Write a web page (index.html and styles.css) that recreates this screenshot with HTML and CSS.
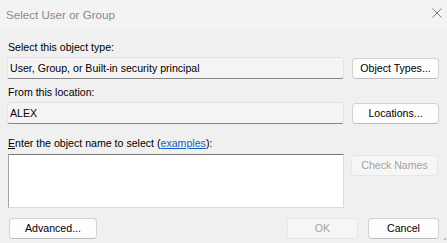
FILE: index.html
```html
<!DOCTYPE html>
<html>
<head>
<meta charset="utf-8">
<title>Select User or Group</title>
<link rel="stylesheet" href="styles.css">
</head>
<body>
<div class="dialog">
  <div class="titlebar">
    <span class="title">Select User or Group</span>
    <svg class="close" width="10" height="10" viewBox="0 0 10 10"><path d="M0.5 0.5 L9.5 9.5 M9.5 0.5 L0.5 9.5" stroke="#7c7c7c" stroke-width="1" fill="none"/></svg>
  </div>
  <div class="content">
    <div class="label l1">Select this object type:</div>
    <div class="row">
      <div class="field">User, Group, or Built-in security principal</div>
      <div class="btn side">Object Types...</div>
    </div>
    <div class="label l2">From this location:</div>
    <div class="row">
      <div class="field">ALEX</div>
      <div class="btn side">Locations...</div>
    </div>
    <div class="label l3"><u>E</u>nter the object name to select (<a class="link">examples</a>):</div>
    <div class="row top">
      <div class="textarea"></div>
      <div class="btn side disabled">Check Names</div>
    </div>
    <div class="bottom">
      <div class="btn adv">Advanced...</div>
      <div class="spacer"></div>
      <div class="btn small disabled">OK</div>
      <div class="btn small">Cancel</div>
    </div>
  </div>
  <div class="grip"></div>
</div>
</body>
</html>
```
FILE: styles.css
```css
html, body {
  margin: 0;
  padding: 0;
  background: #f0f0f0;
}
.dialog {
  position: relative;
  width: 447px;
  height: 243px;
  overflow: hidden;
  background: #f0f0f0;
  font-family: "Liberation Sans", Arial, sans-serif;
  font-size: 10.6px;
  color: #000;
}
.titlebar {
  height: 29px;
  background: #f3f3f3;
  display: flex;
  align-items: center;
  justify-content: space-between;
  padding: 0 5px 0 6px;
}
.title {
  font-size: 11.6px;
  color: #8a8a8a;
  margin-top: -1px;
}
.close {
  display: block;
  margin-top: -3px;
}
.content {
  display: flex;
  flex-direction: column;
  padding: 0 8px 0 7px;
}
.label {
  height: 14px;
  line-height: 14px;
  padding-left: 1px;
  white-space: nowrap;
}
.l1 { margin-top: 11px; margin-bottom: 3px; }
.l2 { margin-top: 6px; margin-bottom: 3px; }
.l3 { margin-top: 12px; margin-bottom: 4px; }
.link {
  color: #0a64c8;
  text-decoration: underline;
}
.row {
  display: flex;
  align-items: flex-start;
  gap: 8px;
}
.field {
  box-sizing: border-box;
  width: 337px;
  height: 22px;
  line-height: 20px;
  padding-left: 2px;
  background: #f4f4f4;
  border: 1px solid #e4e4e4;
  border-bottom-color: #868686;
  border-radius: 3px;
  white-space: nowrap;
}
.btn {
  box-sizing: border-box;
  height: 21px;
  line-height: 19px;
  text-align: center;
  background: #fdfdfd;
  border: 1px solid #d2d2d2;
  border-bottom-color: #bcbcbc;
  border-radius: 4px;
  white-space: nowrap;
}
.side {
  width: 87px;
  margin-top: 1px;
}
.btn.disabled {
  background: #f6f6f6;
  border-color: #e6e6e6;
  color: #a3a3a3;
}
.textarea {
  box-sizing: border-box;
  width: 336px;
  height: 54px;
  margin-left: 1px;
  margin-right: -1px;
  background: #fff;
  border-top: 1px solid #787878;
  border-left: 1px solid #a4a4a4;
  border-right: 1px solid #dadada;
  border-bottom: 1px solid #dadada;
}
.bottom {
  display: flex;
  align-items: center;
  gap: 10px;
  margin-top: 10px;
}
.adv {
  width: 88px;
  margin-left: 2px;
}
.spacer {
  flex: 1;
}
.small {
  width: 71px;
}
.grip {
  position: absolute;
  right: 1px;
  bottom: 3px;
  width: 2px;
  height: 2px;
  background: #b8b8b8;
}
```
